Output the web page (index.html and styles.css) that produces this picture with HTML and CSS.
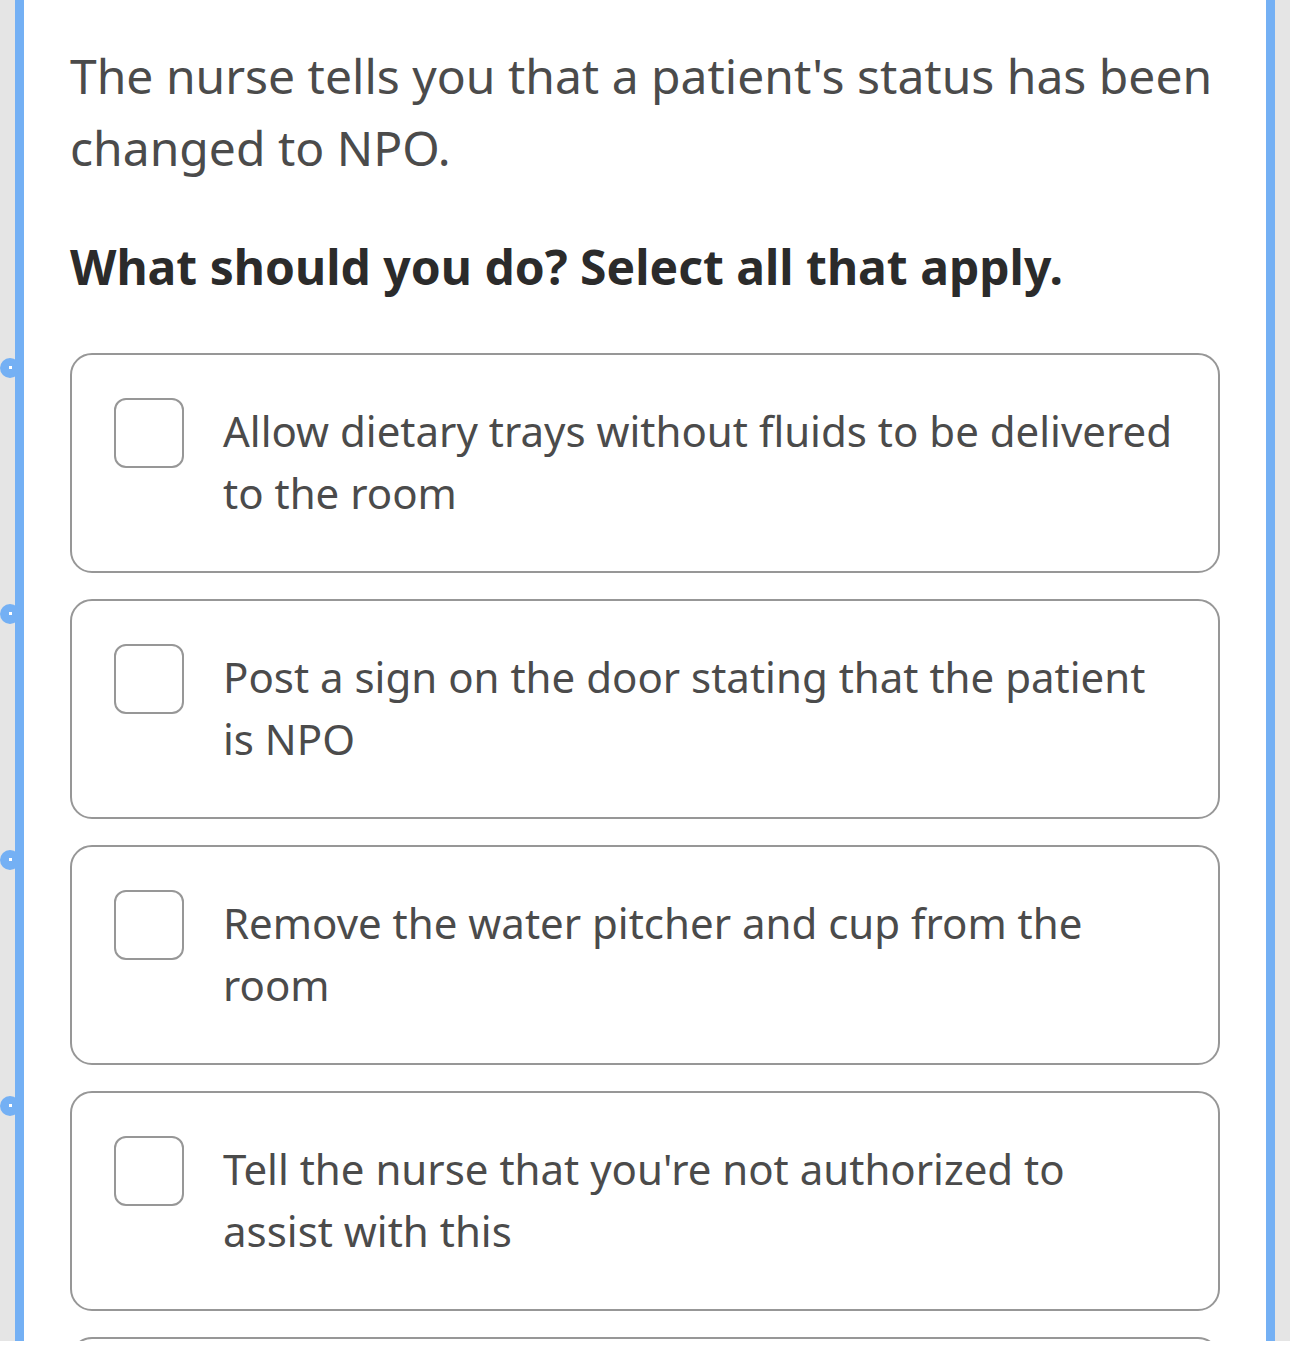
FILE: index.html
```html
<!DOCTYPE html>
<html lang="en">
<head>
    <meta charset="UTF-8">
    <meta name="viewport" content="width=device-width, initial-scale=1.0">
    <title>Question - NPO status</title>
    <link rel="stylesheet" href="styles.css">
</head>
<body>
    <div class="viewport">
        <main class="question-panel">
            <p class="stem">The nurse tells you that a patient's status has been changed to NPO.</p>
            <h2 class="prompt">What should you do? Select all that apply.</h2>

            <div class="options">
                <label class="option">
                    <span class="marker"></span>
                    <span class="checkbox"></span>
                    <span class="option-text">Allow dietary trays without fluids to be delivered to the room</span>
                </label>
                <label class="option">
                    <span class="marker"></span>
                    <span class="checkbox"></span>
                    <span class="option-text">Post a sign on the door stating that the patient is NPO</span>
                </label>
                <label class="option">
                    <span class="marker"></span>
                    <span class="checkbox"></span>
                    <span class="option-text">Remove the water pitcher and cup from the room</span>
                </label>
                <label class="option">
                    <span class="marker"></span>
                    <span class="checkbox"></span>
                    <span class="option-text">Tell the nurse that you're not authorized to assist with this</span>
                </label>
                <label class="option">
                    <span class="marker"></span>
                    <span class="checkbox"></span>
                    <span class="option-text"></span>
                </label>
            </div>
        </main>
    </div>
</body>
</html>
```

FILE: styles.css
```css
:root {
    --accent: #74b0f4;
    --side: #e5e5e5;
    --line: #979797;
    --text: #4b4b4b;
    --heading: #2b2b2b;
}

* {
    margin: 0;
    padding: 0;
    box-sizing: border-box;
    font-family: 'Noto Sans', 'Open Sans', sans-serif;
}

body {
    background: #fff;
}

.viewport {
    height: 1341px;
    overflow: hidden;
    background: var(--side);
    padding: 0 15px;
}

.question-panel {
    min-height: 100%;
    background: #fff;
    border-left: 9px solid var(--accent);
    border-right: 9px solid var(--accent);
    padding: 40px 46px 0 46px;
}

.stem {
    font-size: 48px;
    line-height: 72px;
    color: var(--text);
}

.prompt {
    margin-top: 50px;
    font-size: 48px;
    line-height: 66px;
    font-weight: 700;
    color: var(--heading);
}

.options {
    margin-top: 53px;
    display: flex;
    flex-direction: column;
    gap: 26px;
}

.option {
    position: relative;
    display: flex;
    align-items: flex-start;
    gap: 39px;
    min-height: 220px;
    padding: 45px 44px 47px 42px;
    border: 2px solid var(--line);
    border-radius: 22px;
}

.marker {
    position: absolute;
    left: -72px;
    top: 3px;
    width: 20px;
    height: 20px;
    border-radius: 50%;
    background: var(--accent);
}

.marker::after {
    content: "";
    position: absolute;
    left: 9px;
    top: 8px;
    width: 3px;
    height: 3px;
    background: #fff;
}

.checkbox {
    flex: none;
    width: 70px;
    height: 70px;
    margin-top: -2px;
    border: 2px solid var(--line);
    border-radius: 12px;
}

.option-text {
    font-size: 42px;
    line-height: 62px;
    color: var(--text);
}
```
